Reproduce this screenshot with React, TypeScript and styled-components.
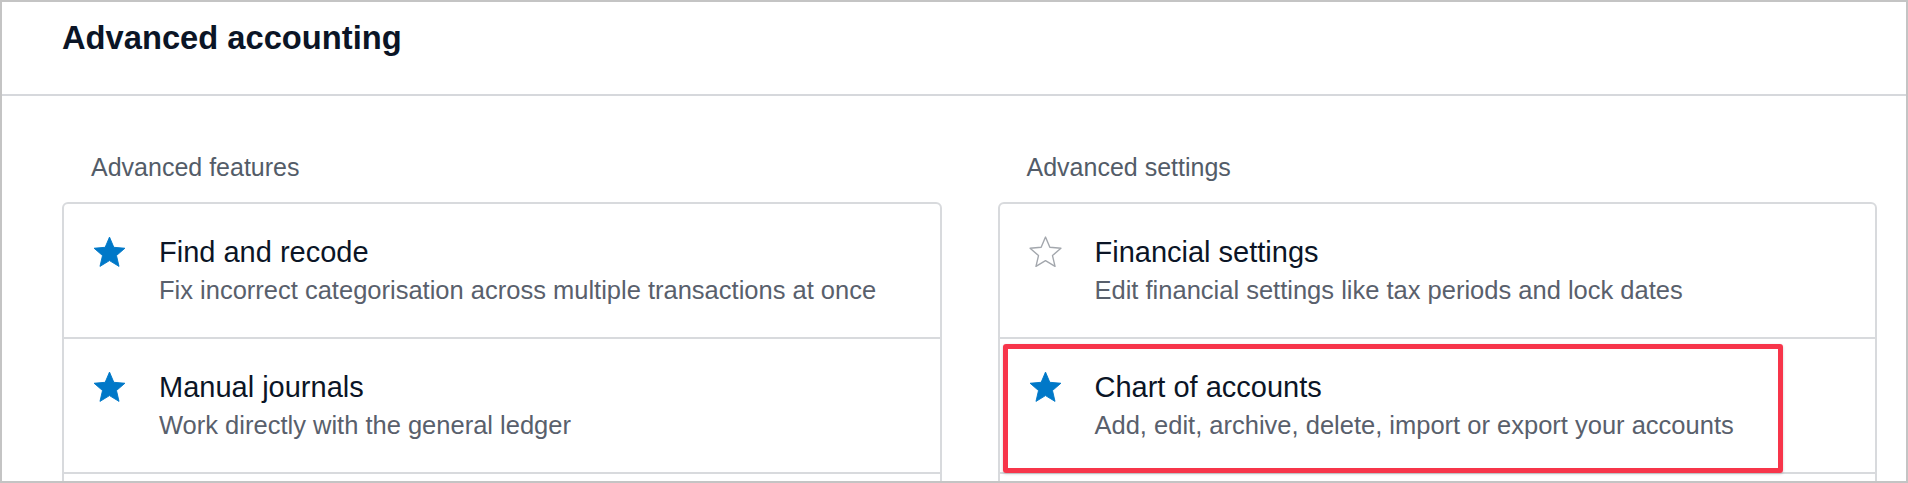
import React from 'react';
import styled, { createGlobalStyle } from 'styled-components';

// Page reset and base font
const GlobalStyle = createGlobalStyle`
  html, body {
    margin: 0;
    padding: 0;
    background: #ffffff;
  }
  body {
    font-family: 'Liberation Sans', Arial, Helvetica, sans-serif;
    -webkit-font-smoothing: antialiased;
  }
  * {
    box-sizing: border-box;
  }
`;

// Grey frame round the whole view
const Frame = styled.div`
  height: 483px;
  border: 2px solid #c4c4c4;
  overflow: hidden;
  background: #fff;
`;

const Header = styled.header`
  padding: 16px 60px 36px 60px;
  border-bottom: 2px solid #d6d8dc;
`;

const PageTitle = styled.h1`
  margin: 0;
  font-size: 32.7px;
  line-height: 40px;
  font-weight: 700;
  color: #0b1526;
`;

// Two columns of settings cards
const Content = styled.main`
  display: grid;
  grid-template-columns: 1fr 1fr;
  gap: 56px;
  padding: 56px 29px 0 60px;
`;

const Column = styled.section`
  display: flex;
  flex-direction: column;
  min-width: 0;
`;

const SectionLabel = styled.h2`
  margin: 0 0 20px 29px;
  font-size: 25px;
  line-height: 30px;
  font-weight: 400;
  color: #535c68;
`;

const Card = styled.div`
  border: 2px solid #d8dadd;
  border-radius: 6px;
  background: #fff;
`;

const Row = styled.div`
  position: relative;
  display: flex;
  align-items: flex-start;
  gap: 31px;
  padding: 30px 20px 30px 27px;
  border-bottom: 2px solid #d8dadd;
`;

const IconBox = styled.span`
  flex: none;
  width: 37px;
  height: 36px;
  display: flex;
  align-items: center;
  justify-content: center;

  svg {
    width: 37px;
    height: 37px;
    display: block;
  }
`;

const TextBlock = styled.div`
  display: flex;
  flex-direction: column;
  min-width: 0;
`;

const ItemTitle = styled.div`
  font-size: 29px;
  line-height: 36px;
  color: #0b1526;
  white-space: nowrap;
`;

const ItemDescription = styled.div`
  margin-top: 3px;
  font-size: 25.5px;
  line-height: 34px;
  color: #59606c;
  white-space: nowrap;
`;

// Red annotation box drawn over a row
const Highlight = styled.div`
  position: absolute;
  top: 5px;
  left: 3px;
  width: 780px;
  height: 129px;
  border: 5px solid #f7354a;
  border-radius: 3px;
  box-shadow: 0 1px 3px rgba(0, 0, 0, 0.18);
  pointer-events: none;
`;

const StarIcon: React.FC<{ filled: boolean }> = ({ filled }) => (
  <svg viewBox="0 0 24 24" aria-hidden="true">
    <path
      d="M12 17.27L18.18 21l-1.64-7.03L22 9.24l-7.19-.61L12 2 9.19 8.63 2 9.24l5.46 4.73L5.82 21z"
      fill={filled ? '#0078c8' : 'none'}
      stroke={filled ? '#0078c8' : '#a3a7ad'}
      strokeWidth={filled ? 0.6 : 0.9}
      strokeLinejoin="round"
    />
  </svg>
);

type Item = {
  title: string;
  description: string;
  starred: boolean;
  highlighted?: boolean;
};

const sections: { label: string; items: Item[] }[] = [
  {
    label: 'Advanced features',
    items: [
      {
        title: 'Find and recode',
        description: 'Fix incorrect categorisation across multiple transactions at once',
        starred: true,
      },
      {
        title: 'Manual journals',
        description: 'Work directly with the general ledger',
        starred: true,
      },
      {
        title: 'Assurance dashboard',
        description: 'Review bank statement balances and user activity',
        starred: false,
      },
    ],
  },
  {
    label: 'Advanced settings',
    items: [
      {
        title: 'Financial settings',
        description: 'Edit financial settings like tax periods and lock dates',
        starred: false,
      },
      {
        title: 'Chart of accounts',
        description: 'Add, edit, archive, delete, import or export your accounts',
        starred: true,
        highlighted: true,
      },
      {
        title: 'Fixed assets',
        description: 'Manage asset types and depreciation settings',
        starred: false,
      },
    ],
  },
];

const App: React.FC = () => {
  return (
    <>
      <GlobalStyle />
      <Frame>
        <Header>
          <PageTitle>Advanced accounting</PageTitle>
        </Header>
        <Content>
          {sections.map((section) => (
            <Column key={section.label}>
              <SectionLabel>{section.label}</SectionLabel>
              <Card>
                {section.items.map((item) => (
                  <Row key={item.title}>
                    <IconBox>
                      <StarIcon filled={item.starred} />
                    </IconBox>
                    <TextBlock>
                      <ItemTitle>{item.title}</ItemTitle>
                      <ItemDescription>{item.description}</ItemDescription>
                    </TextBlock>
                    {item.highlighted && <Highlight />}
                  </Row>
                ))}
              </Card>
            </Column>
          ))}
        </Content>
      </Frame>
    </>
  );
};

export default App;
